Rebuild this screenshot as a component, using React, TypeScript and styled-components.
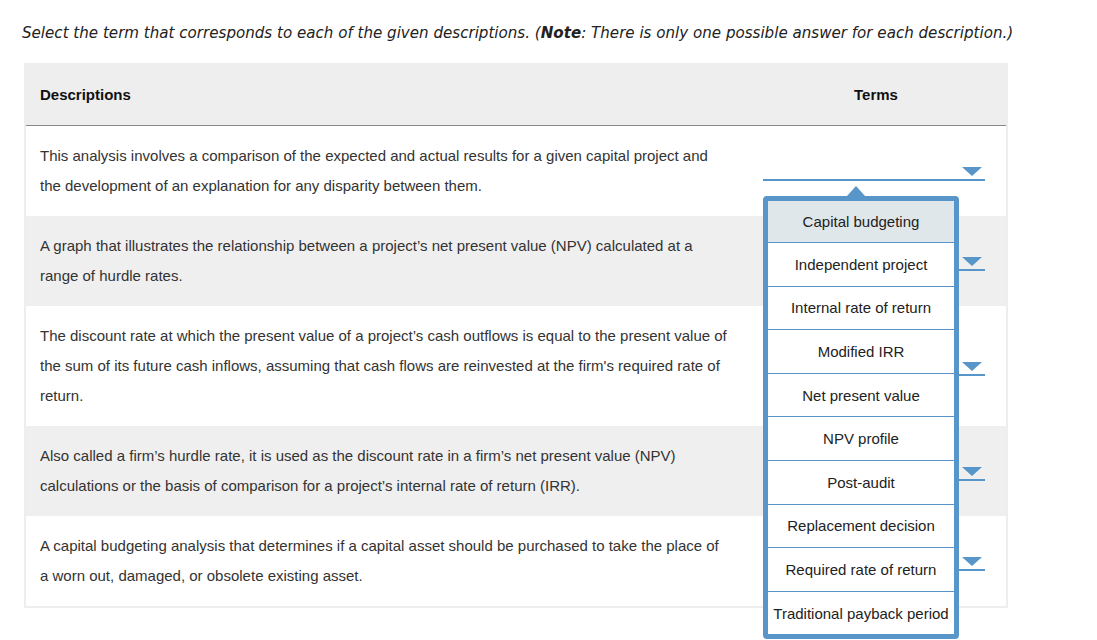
import { styled, createGlobalStyle } from 'styled-components';

const GlobalStyle = createGlobalStyle`
    body {
        margin: 0;
        background: #ffffff;
        font-family: "Liberation Sans", Arial, sans-serif;
    }
`;

const rows = [
    {
        text: 'This analysis involves a comparison of the expected and actual results for a given capital project and the development of an explanation for any disparity between them.',
        shaded: false,
    },
    {
        text: 'A graph that illustrates the relationship between a project\u2019s net present value (NPV) calculated at a range of hurdle rates.',
        shaded: true,
    },
    {
        text: 'The discount rate at which the present value of a project\u2019s cash outflows is equal to the present value of the sum of its future cash inflows, assuming that cash flows are reinvested at the firm\'s required rate of return.',
        shaded: false,
    },
    {
        text: 'Also called a firm\u2019s hurdle rate, it is used as the discount rate in a firm\u2019s net present value (NPV) calculations or the basis of comparison for a project\u2019s internal rate of return (IRR).',
        shaded: true,
    },
    {
        text: 'A capital budgeting analysis that determines if a capital asset should be purchased to take the place of a worn out, damaged, or obsolete existing asset.',
        shaded: false,
    },
];

const options = [
    'Capital budgeting',
    'Independent project',
    'Internal rate of return',
    'Modified IRR',
    'Net present value',
    'NPV profile',
    'Post-audit',
    'Replacement decision',
    'Required rate of return',
    'Traditional payback period',
];

function App() {
    return (
        <Page>
            <GlobalStyle />
            <Intro>
                Select the term that corresponds to each of the given descriptions. (<b>Note</b>: There is only one possible answer for each description.)
            </Intro>
            <Table>
                <HeaderRow>
                    <HeaderCell>Descriptions</HeaderCell>
                    <HeaderCell $center>Terms</HeaderCell>
                </HeaderRow>
                {rows.map((row, i) => (
                    <Row key={i} $shaded={row.shaded}>
                        <DescCell>{row.text}</DescCell>
                        <TermCell>
                            <Select>
                                <Arrow />
                            </Select>
                            {i === 0 && (
                                <Menu>
                                    {options.map((opt, j) => (
                                        <MenuItem key={opt} $active={j === 0}>{opt}</MenuItem>
                                    ))}
                                </Menu>
                            )}
                        </TermCell>
                    </Row>
                ))}
            </Table>
        </Page>
    );
}

export default App;

const Page = styled.div`
    box-sizing: border-box;
    min-height: 640px;
    padding: 22px 0 0 22px;
    width: 1097px;
`;

const Intro = styled.p`
    margin: 0 0 19px 0;
    font-family: "DejaVu Sans", Verdana, sans-serif;
    font-style: italic;
    font-size: 15.1px;
    line-height: 22px;
    color: #222;
    white-space: nowrap;

    b {
        font-weight: bold;
    }
`;

const Table = styled.div`
    margin-left: 2px;
    width: 984px;
    box-sizing: border-box;
    border: 2px solid #eeeeee;
    border-top: none;
`;

const HeaderRow = styled.div`
    display: grid;
    grid-template-columns: 1fr 260px;
    align-items: center;
    height: 62px;
    background: #eeeeee;
    border-bottom: 1px solid #888888;
`;

const HeaderCell = styled.div<{ $center?: boolean }>`
    padding-left: ${({ $center }) => ($center ? '0' : '14px')};
    text-align: ${({ $center }) => ($center ? 'center' : 'left')};
    font-size: 15px;
    font-weight: bold;
    color: #111;
`;

const Row = styled.div<{ $shaded: boolean }>`
    display: grid;
    grid-template-columns: 1fr 260px;
    align-items: center;
    background: ${({ $shaded }) => ($shaded ? '#efefef' : '#ffffff')};
`;

const DescCell = styled.div`
    padding: 15px 16px 15px 14px;
    font-size: 15px;
    line-height: 30px;
    color: #333;
`;

const TermCell = styled.div`
    position: relative;
    padding: 0 21px 0 17px;
`;

const Select = styled.div`
    position: relative;
    height: 18px;
    border-bottom: 2px solid #5895c9;
`;

const Arrow = styled.span`
    position: absolute;
    right: 3px;
    top: 6px;
    width: 0;
    height: 0;
    border-left: 10px solid transparent;
    border-right: 10px solid transparent;
    border-top: 9px solid #5895c9;
`;

const Menu = styled.div`
    position: absolute;
    left: 17px;
    top: 35px;
    z-index: 5;
    width: 196px;
    box-sizing: border-box;
    border: 5px solid #5895c9;
    border-radius: 4px;
    background: #ffffff;

    &::before {
        content: '';
        position: absolute;
        left: 79px;
        top: -15px;
        width: 0;
        height: 0;
        border-left: 9px solid transparent;
        border-right: 9px solid transparent;
        border-bottom: 10px solid #5895c9;
    }
`;

const MenuItem = styled.div<{ $active: boolean }>`
    height: 42.6px;
    display: flex;
    align-items: center;
    justify-content: center;
    font-size: 15px;
    color: #222;
    white-space: nowrap;
    background: ${({ $active }) => ($active ? '#dfe7eb' : '#ffffff')};
    border-top: 1px solid #5895c9;

    &:first-child {
        border-top: none;
        height: 41px;
    }
`;
